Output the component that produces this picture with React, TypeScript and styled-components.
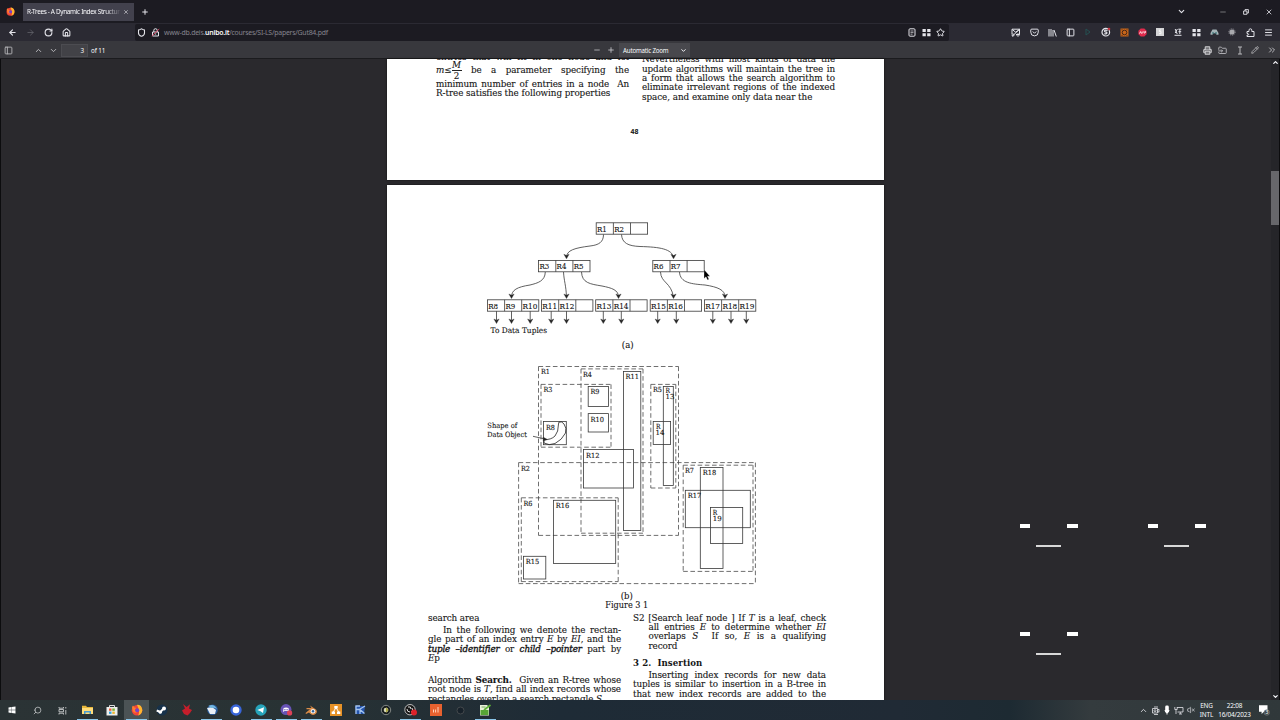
import React from "react";
import styled, { createGlobalStyle, css } from "styled-components";
import {
  ArrowLeft, ArrowRight, RotateCw, House, Shield, X, Plus, Minus, ChevronDown, ChevronUp, Star,
  PanelLeft, Menu, Printer, FolderInput, ChevronsRight, Pencil, Search, Pocket, VolumeX,
} from "lucide-react";
import { FaWindows } from "react-icons/fa";

const Global = createGlobalStyle`
  * { box-sizing: border-box; }
  html, body { margin: 0; background: #2a292d; overflow: hidden; }
  svg { display: block; flex: none; }
`;

const Screen = styled.div`
  position: relative;
  width: 1280px;
  height: 720px;
  overflow: hidden;
  display: flex;
  flex-direction: column;
  font-family: "Noto Sans", "Open Sans", sans-serif;
  color: #fbfbfe;
  background: #2a292d;
  box-shadow: inset 1px 0 #0c0c0e;
`;

const TabStrip = styled.div`
  height: 23px;
  flex: none;
  display: flex;
  align-items: center;
  background: #1c1b22;
`;

const Slot = styled.div<{ $w: number; $c?: string }>`
  width: ${(p) => p.$w}px;
  flex: none;
  display: flex;
  align-items: center;
  justify-content: center;
  color: ${(p) => p.$c ?? "#e4e4ea"};
`;

const Tab = styled.div`
  width: 111px;
  height: 18px;
  margin-left: 3px;
  padding: 0 5px 0 4px;
  display: flex;
  align-items: center;
  justify-content: space-between;
  background: #42414d;
  font-size: 6.4px;
`;

const TabTitle = styled.div`
  width: 95px;
  overflow: hidden;
  white-space: nowrap;
  letter-spacing: -0.33px;
  mask-image: linear-gradient(90deg, #000 82%, transparent);
`;

const Spacer = styled.div`
  flex: 1;
`;

const NavBar = styled.div`
  height: 18px;
  flex: none;
  display: flex;
  align-items: center;
  padding-left: 3px;
  background: #2b2a33;
`;

const UrlField = styled.div`
  width: 814px;
  height: 17px;
  margin: 0 58px 0 60px;
  display: flex;
  align-items: center;
  background: #1c1b22;
  border-radius: 2px;
`;

const Url = styled.div`
  margin-left: 2px;
  flex: 1;
  font-size: 6.9px;
  letter-spacing: -0.23px;
  white-space: nowrap;
  color: #85848e;
  b { color: #fbfbfe; font-weight: 600; }
`;

const PdfBar = styled.div`
  height: 18px;
  flex: none;
  display: flex;
  align-items: center;
  background: #38383d;
  border-bottom: 1px solid #1b1b1e;
  font-size: 6.3px;
  letter-spacing: -0.1px;
  padding-top: 1px;
`;

const PageInput = styled.div`
  width: 27px;
  height: 13px;
  margin-right: 3px;
  padding-right: 3px;
  line-height: 12px;
  text-align: right;
  background: #424247;
  border: 1px solid #4c4c51;
`;

const ZoomSelect = styled.div`
  width: 71px;
  height: 14px;
  margin-left: 1px;
  padding: 0 3px 0 4px;
  display: flex;
  align-items: center;
  justify-content: space-between;
  background: #48484d;
  font-size: 6.2px;
  letter-spacing: -0.2px;
`;

const Viewer = styled.div`
  height: 641px;
  flex: none;
  display: flex;
  justify-content: space-between;
`;

const Pages = styled.div`
  margin-left: 387px;
  width: 497px;
  display: flex;
  flex-direction: column;
  gap: 5px;
`;

const Sheet = styled.div<{ $h: number }>`
  height: ${(p) => p.$h}px;
  flex: none;
  overflow: hidden;
  background: #fff;
  color: #161616;
  box-shadow: 0 0 2px #111;
  font-family: "DejaVu Serif", serif;
  -webkit-text-stroke: 0.12px #161616;
`;

const Columns = styled.div<{ $left: number; $gap: number; $h: number; $pull?: number }>`
  display: flex;
  height: ${(p) => p.$h}px;
  gap: ${(p) => p.$gap}px;
  padding-left: ${(p) => p.$left}px;
  margin-top: ${(p) => -(p.$pull ?? 0)}px;
`;

const Column = styled.div`
  width: 193px;
`;

const Line = styled.div<{ $t?: number; $in?: number; $ragged?: boolean; $b?: boolean; $ls?: number }>`
  height: 9.4px;
  line-height: 9.4px;
  font-size: 8.8px;
  white-space: nowrap;
  letter-spacing: ${(p) => p.$ls ?? -0.1}px;
  margin-top: ${(p) => p.$t ?? 0}px;
  padding-left: ${(p) => p.$in ?? 0}px;
  text-align-last: ${(p) => (p.$ragged ? "left" : "justify")};
  ${(p) => p.$b && css`font-weight: bold; font-size: 8.6px; letter-spacing: 0.08px; -webkit-text-stroke: 0;`}
`;

const Term = styled.i`
  -webkit-text-stroke: 0.35px #161616;
`;

const FormulaLine = styled.div`
  height: 18px;
  display: flex;
  align-items: center;
  justify-content: space-between;
  font-size: 8.8px;
  line-height: 9.4px;
  letter-spacing: -0.1px;
`;

const Formula = styled.span`
  display: flex;
  align-items: center;
`;

const Fraction = styled.span`
  display: flex;
  flex-direction: column;
  align-items: center;
  width: 10px;
  line-height: 9px;
  i { width: 10px; text-align: center; border-bottom: 1px solid #222; }
  span { padding-top: 1px; }
`;

const Folio = styled.div`
  margin-top: 19px;
  text-align: center;
  font: bold 6.6px/9px "Liberation Mono", monospace;
  padding-right: 2px;
`;

const ScrollTrack = styled.div`
  width: 9px;
  display: flex;
  flex-direction: column;
  align-items: center;
  justify-content: space-between;
  background: #252529;
  border-right: 1px solid #0c0c0e;
`;

const Thumb = styled.div`
  width: 8px;
  height: 54px;
  margin: 105px 0 auto;
  background: #67676b;
`;

const Taskbar = styled.div`
  height: 20px;
  flex: none;
  display: flex;
  background: linear-gradient(90deg, #2b3335 0, #283234 310px, #1e2b36 560px, #202a35 900px, #1d2a32 1010px, #343b3e 1090px, #30383a 100%);
`;

const Task = styled.div<{ $on?: boolean; $active?: boolean; $c?: string }>`
  width: 24.9px;
  height: 20px;
  display: flex;
  align-items: center;
  justify-content: center;
  color: ${(p) => p.$c ?? "#fff"};
  background: ${(p) => (p.$active ? "#4b5355" : "transparent")};
  position: relative;
  &::after {
    content: "";
    position: absolute;
    left: 2px;
    right: 2px;
    bottom: 0;
    height: 1.4px;
    background: ${(p) => (p.$on ? "#8bc7ea" : "transparent")};
  }
`;

const TrayText = styled.div<{ $w: number }>`
  width: ${(p) => p.$w}px;
  display: flex;
  flex-direction: column;
  justify-content: center;
  align-items: center;
  font-size: 6.4px;
  line-height: 9.4px;
  letter-spacing: -0.15px;
  white-space: nowrap;
`;

const Face = styled.div<{ $x: number; $y: number }>`
  position: absolute;
  left: ${(p) => p.$x}px;
  top: ${(p) => p.$y}px;
  width: 58px;
  height: 23px;
  display: flex;
  flex-direction: column;
  justify-content: space-between;
  align-items: center;
`;
const Eyes = styled.div`
  width: 58px;
  display: flex;
  justify-content: space-between;
`;
const Eye = styled.div`
  width: 10.5px;
  height: 4px;
  background: #fff;
`;
const Mouth = styled.div`
  width: 24.5px;
  height: 2px;
  background: #d8d8d8;
`;

/* ---- R-tree drawing ---- */

type Node = { x: number; y: number; labels: string[] };
const nodes: Node[] = [
  { x: 596.2, y: 222.8, labels: ["R1", "R2", ""] },
  { x: 538.6, y: 260.4, labels: ["R3", "R4", "R5"] },
  { x: 652.8, y: 260.4, labels: ["R6", "R7", ""] },
  { x: 487.4, y: 299.8, labels: ["R8", "R9", "R10"] },
  { x: 541.5, y: 299.8, labels: ["R11", "R12", ""] },
  { x: 595.7, y: 299.8, labels: ["R13", "R14", ""] },
  { x: 650.2, y: 299.8, labels: ["R15", "R16", ""] },
  { x: 704.4, y: 299.8, labels: ["R17", "R18", "R19"] },
];
const curves = [
  "M603.5 234.5C603.5 242 599 245 590 246C575 248 566.5 250 566.5 257.5",
  "M621.5 234.5C622 243 628 246 640 246.5C660 247 672 249 673.5 257.5",
  "M545.3 272C545 281 538 283 530 285C517 287 511.5 290 511.5 297",
  "M563.5 272C564 281 566 285 566.5 297",
  "M581.5 272C582 283 590 284 602 286C612 288 618.5 290 618.5 297",
  "M660.5 272C661 283 671 282 673.5 297",
  "M679.5 272C680 283 692 284 705 285C718 287 725 290 725 297",
];
const drops = [496.5, 511.5, 530.2, 551.2, 566.5, 603.3, 621.3, 657.7, 676.3, 712.8, 731, 746.3];
const tips: [number, number][] = [
  [566.5, 258.8], [673.5, 258.8], [511.5, 298.5], [566.5, 298.5], [618.5, 298.5], [673.5, 298.5], [725, 298.5],
  ...drops.map((x): [number, number] => [x, 323.5]),
];

type Region = [number, number, number, number];
const dashed: Region[] = [
  [538.5, 366.5, 678.5, 535.4], [581, 368.9, 643, 533.2], [541, 384.4, 611, 447.2], [650.8, 384.4, 675.8, 488],
  [518.6, 462.6, 755.4, 583.6], [521.3, 497.8, 618.2, 581.6], [683.2, 465.2, 753, 571.4],
];
const solid: Region[] = [
  [588.2, 386.4, 608.5, 406.5], [588.2, 413.6, 608.5, 432], [623.4, 371.4, 640.8, 530.4], [663.3, 386.4, 673.3, 485.6],
  [653.2, 421.5, 670.6, 444.5], [543.5, 421.4, 566.3, 444.7], [583.4, 449.5, 633.5, 488], [553.4, 500.3, 615.7, 563.5],
  [523.4, 556.3, 545.8, 579], [700.3, 467.5, 723, 568.6], [685.3, 490.3, 750.3, 527.7], [710.4, 507.4, 742.7, 543.4],
];
const labels: [number, number, string][] = [
  [541, 374, "R1"], [583, 376.5, "R4"], [543.5, 391.5, "R3"], [590.5, 394, "R9"], [590.5, 421.8, "R10"],
  [625.5, 379, "R11"], [653, 391.5, "R5"], [665.5, 393.3, "R"], [665.5, 399.3, "13"], [656, 429, "R"], [655.5, 435, "14"],
  [546, 429.5, "R8"], [586, 457.5, "R12"], [521, 470.5, "R2"], [523.5, 505.5, "R6"], [555.8, 508, "R16"],
  [525.8, 563.7, "R15"], [685, 473, "R7"], [702.7, 475.2, "R18"], [687.8, 497.8, "R17"], [712.7, 514.8, "R"], [712.7, 520.8, "19"],
];

function Figure() {
  return (
    <svg width="497" height="400" viewBox="387 215 497 400" fill="none" stroke="#383838" strokeWidth="0.8">
      {nodes.map((n) => (
        <g key={n.labels[0]}>
          <rect x={n.x} y={n.y} width="51.4" height="11.4" />
          <path d={`M${n.x + 17.2} ${n.y}v11.4M${n.x + 34.3} ${n.y}v11.4`} />
          {n.labels.map((l, i) => l && (
            <text key={l} x={n.x + 0.8 + i * 17.2} y={n.y + 9} fontSize="8.2" fill="#151515" stroke="#151515" strokeWidth=".12"
              textLength={l.length === 2 ? 9.8 : 14.8} lengthAdjust="spacingAndGlyphs">{l}</text>
          ))}
        </g>
      ))}
      {curves.map((d) => <path key={d} d={d} />)}
      {drops.map((x) => <path key={x} d={`M${x} 311.2v9`} />)}
      {tips.map(([x, y]) => <path key={`${x}-${y}`} d={`M${x - 2.6} ${y - 4.5}L${x} ${y}L${x + 2.6} ${y - 4.5}L${x} ${y - 3.3}Z`} fill="#222" strokeWidth="0.4" />)}
      {dashed.map(([a, b, c, d]) => (
        <path key={`${a}${b}`} d={`M${a} ${b}H${c}M${a} ${d}H${c}M${a} ${b}V${d}M${c} ${b}V${d}`} strokeDasharray="4.6 2.6" stroke="#4a4a4a" />
      ))}
      {solid.map(([a, b, c, d]) => <rect key={`${a}${b}`} x={a} y={b} width={c - a} height={d - b} />)}
      <path d="M559 422Q562 421 564 424Q567 428 565.5 433Q562 440 555 443.5Q549 446 544 443V439.5Q551 440 555 436Q558.5 432 558.5 424Z" stroke="#222" />
      <path d="M533 436.3L545 439" />
      <path d="M543 437L547.5 439.6L543.3 441Z" fill="#222" strokeWidth="0.4" />
      <g fill="#151515" stroke="#151515" strokeWidth=".12">
        {labels.map(([x, y, s]) => (
          <text key={`${s}${x}${y}`} x={x} y={y} fontSize="7" textLength={s.length * 4.5} lengthAdjust="spacingAndGlyphs">{s}</text>
        ))}
        <text x="490.5" y="333" fontSize="7.8" textLength="56.5" lengthAdjust="spacingAndGlyphs">To Data Tuples</text>
        <text x="621.8" y="348" fontSize="8.4" textLength="11.8" lengthAdjust="spacingAndGlyphs">(a)</text>
        <text x="487.3" y="428.3" fontSize="7.2" textLength="30" lengthAdjust="spacingAndGlyphs">Shape of</text>
        <text x="487.3" y="437.1" fontSize="7.2" textLength="39.5" lengthAdjust="spacingAndGlyphs">Data Object</text>
        <text x="620.8" y="599" fontSize="8.4" textLength="12" lengthAdjust="spacingAndGlyphs">(b)</text>
        <text x="605.3" y="608.4" fontSize="8.8" textLength="43" lengthAdjust="spacingAndGlyphs">Figure 3 1</text>
      </g>
      <path d="M704 269.5V278.5L706 276.8L707.5 280L709 279.3L707.5 276.2H710Z" fill="#000" stroke="#fff" strokeWidth="0.3" />
    </svg>
  );
}

const Grid = () => (
  <svg width="9" height="9" viewBox="0 0 9 9" fill="currentColor"><path d="M.5 1h3.3v3H.5zM5.2 1h3.3v3H5.2zM.5 5.2h3.3v3H.5zM5.2 5.2h3.3v3H5.2z" /></svg>
);
const Fox = ({ s }: { s: number }) => (
  <svg width={s} height={s} viewBox="0 0 12 12">
    <circle cx="6" cy="6.3" r="5.3" fill="#f04438" />
    <path d="M6 1C9 0 11.5 3.5 11.3 6.5C11 9 9.5 11 7 11.5C9 9 8 5 6 1Z" fill="#ffb52e" />
    <path d="M1 3L2 1.5L3.5 3.5L5.5 4L4 5.2Q4 8 6.5 8Q3 10 1.8 7Z" fill="#ff7a2f" />
    <circle cx="6.2" cy="6.3" r="2" fill="#7543c9" />
  </svg>
);
const Reader = () => (
  <svg width="8" height="9" viewBox="0 0 8 9" fill="none" stroke="currentColor"><rect x="1" y=".8" width="6" height="7.4" rx="1" /><path d="M2.5 3h3M2.5 4.6h3M2.5 6.2h2" strokeWidth=".7" /></svg>
);
const Library = () => (
  <svg width="9" height="9" viewBox="0 0 9 9" fill="none" stroke="currentColor"><path d="M1 1v7.5M3 1v7.5M5 2v6.5M6 2l2.3 6.5" /></svg>
);
const MaskedMail = () => (
  <svg width="10" height="9" viewBox="0 0 10 9" fill="none" stroke="currentColor"><path d="M1 6V1.2h7.5V6.5H5M1.2 1.5L4.7 4.2 8.3 1.5M8.8 1L1 8.4" /><circle cx="2" cy="7" r="1.1" strokeWidth=".8" /><circle cx="7" cy="7" r="1.2" strokeWidth=".8" /></svg>
);
const Extensions = () => (
  <svg width="9" height="9" viewBox="0 0 9 9" fill="none" stroke="currentColor"><path d="M1 3.5h2V2.2a1.4 1.4 0 0 1 2.8 0V3.5H8v5H1V7.2q1.7 0 1.7-.8T1 5.5z" strokeLinejoin="round" /></svg>
);

export default function App() {
  return (
    <>
      <Global />
      <Screen>
        <TabStrip>
          <Slot $w={20}><Fox s={9} /></Slot>
          <Tab>
            <TabTitle>R-Trees - A Dynamic Index Structur</TabTitle>
            <X size={6} />
          </Tab>
          <Slot $w={21}><Plus size={8} strokeWidth={3} /></Slot>
          <Spacer />
          <Slot $w={20}><ChevronDown size={9} strokeWidth={3} /></Slot>
          <Slot $w={20} />
          <Slot $w={23} $c="#a0a0a5"><Minus size={8} strokeWidth={2} /></Slot>
          <Slot $w={23}>
            <svg width="6" height="6" viewBox="0 0 6 6" fill="none" stroke="currentColor" strokeWidth=".9"><path d="M.6 2h3.3v3.3H.6zM2 2V.6h3.4V4H4" /></svg>
          </Slot>
          <Slot $w={23}><X size={8} strokeWidth={2.4} /></Slot>
        </TabStrip>

        <NavBar>
          <Slot $w={18}><ArrowLeft size={9} strokeWidth={3} /></Slot>
          <Slot $w={18} $c="#66656e"><ArrowRight size={9} /></Slot>
          <Slot $w={18}><RotateCw size={9} strokeWidth={3} /></Slot>
          <Slot $w={18}><House size={9} strokeWidth={2.7} /></Slot>
          <UrlField>
            <Slot $w={13}><Shield size={9} strokeWidth={2.8} /></Slot>
            <Slot $w={14}>
              <svg width="9" height="9" viewBox="0 0 9 9" fill="none" stroke="currentColor"><path d="M1.5 4h6v4h-6zM2.8 4V2.4a1.7 1.7 0 0 1 3.4 0V4M3.8 6h1.4" /><path d="M.8 8L8.2 1" stroke="#e04463" strokeWidth=".9" /></svg>
            </Slot>
            <Url>www-db.deis.<b>unibo.it</b>/courses/SI-LS/papers/Gut84.pdf</Url>
            <Slot $w={15}><Reader /></Slot>
            <Slot $w={14}><Grid /></Slot>
            <Slot $w={14}><Star size={9} strokeWidth={2.6} /></Slot>
            <Slot $w={2} />
          </UrlField>
          <Slot $w={18}><MaskedMail /></Slot>
          <Slot $w={18}><Pocket size={9} strokeWidth={2.6} /></Slot>
          <Slot $w={18}><Library /></Slot>
          <Slot $w={18}><PanelLeft size={9} strokeWidth={2.6} /></Slot>
          <Slot $w={18} $c="#245052"><svg width="8" height="8" viewBox="0 0 8 8" fill="none" stroke="currentColor"><path d="M2 1v6l4-3z" /></svg></Slot>
          <Slot $w={18}>
            <svg width="10" height="10" viewBox="0 0 10 10" fill="none" stroke="currentColor" strokeWidth="1.2"><circle cx="4.8" cy="5.2" r="3.8" /><path d="M6.5 3.5Q3.5 2.5 3.6 4.3Q4 5.3 5.5 5.2Q7 6.8 3.3 6.9" /><circle cx="8" cy="2" r="1.3" fill="#c3343f" stroke="none" /></svg>
          </Slot>
          <Slot $w={18}>
            <svg width="9" height="9" viewBox="0 0 9 9"><path d="M.5.5h8v8h-8z" fill="#c8661b" /><circle cx="4.5" cy="4.5" r="2.3" fill="none" stroke="#452718" strokeWidth="1" /><path d="M2 1.2v1M7 1.2v1M2 7v1M7 7v1" stroke="#452718" strokeWidth=".7" /></svg>
          </Slot>
          <Slot $w={18}>
            <svg width="9" height="9" viewBox="0 0 9 9"><path d="M2.7.4h3.6l2.3 2.3v3.6L6.3 8.6H2.7L.4 6.3V2.7z" fill="#e02b4d" /><path d="M1.5 5.6l1-2 1 2M4.2 3.5v2M5 4h1M6.5 3.5h1v1h-1v1" fill="none" stroke="#fff" strokeWidth=".8" /></svg>
          </Slot>
          <Slot $w={18}><svg width="8" height="8" viewBox="0 0 8 8"><path d="M0 0h8v8H0z" fill="#d4d4d6" /><path d="M5 2H3.4v1.6H5v2H3" fill="none" stroke="#f6f6f6" /></svg></Slot>
          <Slot $w={18}><svg width="8" height="8" viewBox="0 0 8 8" fill="none" stroke="currentColor"><path d="M.5 7.3h7M1.2 1l2 5M3.4 1L1.2 5M4.3 1.2h3M5.8 1.2V6M4.5 3.7h2.7" /></svg></Slot>
          <Slot $w={18}><Grid /></Slot>
          <Slot $w={18} $c="#a4b3b7"><svg width="9" height="7" viewBox="0 0 9 7" fill="currentColor"><path d="M2.5.5h4L8.5 4v1.7H6.6L5.5 4.3h-2L2.4 5.7H.5V4z" /><path d="M2 4h2M5 4h2" stroke="#26686c" /></svg></Slot>
          <Slot $w={18} $c="#a9a9ae"><svg width="8" height="8" viewBox="0 0 8 8"><circle cx="4" cy="4" r="2.6" fill="currentColor" /><circle cx="4" cy="4" r="3.2" fill="none" stroke="currentColor" strokeDasharray="1 1" strokeWidth=".8" /></svg></Slot>
          <Slot $w={18}><Extensions /></Slot>
          <Slot $w={18}><Menu size={9} strokeWidth={2.6} /></Slot>
        </NavBar>

        <PdfBar>
          <Slot $w={16} $c="#b4b4b8"><PanelLeft size={9} strokeWidth={2.4} /></Slot>
          <Slot $w={15} />
          <Slot $w={15} $c="#b4b4b8"><ChevronUp size={9} strokeWidth={2.6} /></Slot>
          <Slot $w={15} $c="#b4b4b8"><ChevronDown size={9} strokeWidth={2.6} /></Slot>
          <PageInput>3</PageInput>
          <span>of 11</span>
          <Spacer />
          <Slot $w={14} $c="#c4c4c8"><Minus size={8} strokeWidth={2.4} /></Slot>
          <Slot $w={14} $c="#c4c4c8"><Plus size={8} strokeWidth={2.6} /></Slot>
          <ZoomSelect>Automatic Zoom<ChevronDown size={7} strokeWidth={3.2} /></ZoomSelect>
          <Slot $w={510} />
          <Slot $w={15} $c="#c9c9cc"><Printer size={9} strokeWidth={2.8} fill="#77777b" /></Slot>
          <Slot $w={15} $c="#b9b9bd"><FolderInput size={9} strokeWidth={2.4} /></Slot>
          <Slot $w={20} $c="#b9b9bd"><svg width="6" height="9" viewBox="0 0 6 9" fill="none" stroke="currentColor"><path d="M1 1h4M1 8h4M3 1v7" /></svg></Slot>
          <Slot $w={10} $c="#b9b9bd"><Pencil size={8} strokeWidth={2.5} /></Slot>
          <Slot $w={4.5} />
          <Slot $w={15.5} $c="#b9b9bd"><ChevronsRight size={10} strokeWidth={2.4} /></Slot>
        </PdfBar>

        <Viewer>
          <Pages>
            <Sheet $h={121}>
              <Columns $left={49} $gap={13} $h={56} $pull={6.5}>
                <Column>
                  <Line>entries that will fit in one node and let</Line>
                  <FormulaLine>
                    <Formula><i>m</i>≤<Fraction><i>M</i><span>2</span></Fraction></Formula>
                    <span>be</span><span>a</span><span>parameter</span><span>specifying</span><span>the</span>
                  </FormulaLine>
                  <Line>minimum number of entries in a node &nbsp;An</Line>
                  <Line $ragged $ls={-0.07}>R-tree satisfies the following properties</Line>
                </Column>
                <Column>
                  <Line $t={2.7}>Nevertheless with most kinds of data the</Line>
                  <Line>update algorithms will maintain the tree in</Line>
                  <Line>a form that allows the search algorithm to</Line>
                  <Line>eliminate irrelevant regions of the indexed</Line>
                  <Line $ragged $ls={-0.05}>space, and examine only data near the</Line>
                </Column>
              </Columns>
              <Folio>48</Folio>
            </Sheet>
            <Sheet $h={515}>
              <Columns $left={0} $gap={0} $h={425} $pull={-30}><Figure /></Columns>
              <Columns $left={41} $gap={12} $h={100} $pull={26.4}>
                <Column>
                  <Line $ragged>search area</Line>
                  <Line $t={2.8} $in={15}>In the following we denote the rectan-</Line>
                  <Line>gle part of an index entry <i>E</i> by <i>EI</i>, and the</Line>
                  <Line $ls={-0.14}><Term>tuple –identifier</Term> or <Term>child –pointer</Term> part by</Line>
                  <Line $ragged><i>E</i>p</Line>
                  <Line $t={12.5}>Algorithm <b>Search.</b> &nbsp;Given an R-tree whose</Line>
                  <Line>root node is <i>T</i>, find all index records whose</Line>
                  <Line $ragged>rectangles overlap a search rectangle <i>S</i></Line>
                </Column>
                <Column>
                  <Line>S2 [Search leaf node ] If <i>T</i> is a leaf, check</Line>
                  <Line $in={15.5}>all entries <i>E</i> to determine whether <i>EI</i></Line>
                  <Line $in={15.5}>overlaps <i>S</i> &nbsp;If so, <i>E</i> is a qualifying</Line>
                  <Line $in={15.5} $ragged>record</Line>
                  <Line $t={7.5} $ragged $b>3 2. &nbsp;Insertion</Line>
                  <Line $t={3} $in={15.5}>Inserting index records for new data</Line>
                  <Line>tuples is similar to insertion in a B-tree in</Line>
                  <Line>that new index records are added to the</Line>
                </Column>
              </Columns>
            </Sheet>
          </Pages>
          <ScrollTrack>
            <ChevronUp size={7} strokeWidth={4} />
            <Thumb />
            <ChevronDown size={7} strokeWidth={4} />
          </ScrollTrack>
        </Viewer>

        <Taskbar>
          <Task><FaWindows size={8} /></Task>
          <Task $c="#c9cccd"><Search size={9} transform="scale(-1 1)" /></Task>
          <Task $c="#c9cccd"><svg width="9" height="9" viewBox="0 0 9 9" fill="none" stroke="currentColor"><path d="M1 1v1.2h4.5V1M1 3.5h4.5v2.3H1zM1 8.5V7.2h4.5v1.3M7.8 1v1.5M7.8 4v4.5" strokeWidth=".9" /></svg></Task>
          <Task $on><svg width="11" height="10" viewBox="0 0 11 10"><path d="M0 .8h4l1 1.3h6V9H0z" fill="#e7b73b" /><path d="M0 3h11v6H0z" fill="#ffdc79" /><path d="M2 6h7v3H7.5V7.5h-4V9H2z" fill="#479bd3" /></svg></Task>
          <Task><svg width="12" height="11" viewBox="0 0 12 11"><path d="M3.5 2V.5h5V2" fill="none" stroke="#ddd" /><path d="M.5 2h11v8.5H.5z" fill="#eceeed" /><path d="M3 3.5h2.5v2.3H3z" fill="#ef5a3a" /><path d="M6.3 3.5h2.5v2.3H6.3z" fill="#7bb52f" /><path d="M3 6.6h2.5v2.3H3z" fill="#35a2dc" /><path d="M6.3 6.6h2.5v2.3H6.3z" fill="#efb62f" /></svg></Task>
          <Task $on $active><Fox s={12} /></Task>
          <Task><svg width="12" height="12" viewBox="0 0 12 12"><circle cx="6" cy="6" r="5.5" fill="#17324b" /><path d="M.7 6.5L4.5 8 7 5.2" fill="none" stroke="#fff" strokeWidth="2" /><circle cx="8" cy="4.4" r="2" fill="#fff" /><circle cx="4.3" cy="8.2" r="1.6" fill="#fff" /></svg></Task>
          <Task><svg width="12" height="12" viewBox="0 0 12 12"><path d="M2 0L5.7 3 9 .3 8 4.5 11 6 9 9 6.5 11.5 3 10 1 6.5 4 4.5z" fill="#c51e2b" /></svg></Task>
          <Task $on><svg width="12" height="12" viewBox="0 0 12 12"><circle cx="6.5" cy="5.7" r="5.3" fill="#285b9b" /><path d="M1 4L6 3l4 3-1 4H4z" fill="#e7eef5" /><path d="M2.5 1.8Q8-1 11 5Q8 3 5 4Z" fill="#71b6df" /></svg></Task>
          <Task><svg width="12" height="12" viewBox="0 0 12 12"><circle cx="6" cy="6" r="5.7" fill="#3865d9" /><circle cx="6" cy="6" r="3.3" fill="#fff" /></svg></Task>
          <Task $on $c="#26a4ba"><svg width="12" height="12" viewBox="0 0 12 12"><circle cx="6" cy="6" r="5.7" fill="currentColor" /><path d="M2.3 6L9 3.2 8 9 5.5 7.2z" fill="#fff" /></svg></Task>
          <Task $on><svg width="13" height="12" viewBox="0 0 13 12"><circle cx="6" cy="5.6" r="5.5" fill="#6753b5" /><path d="M3 8L3.6 4Q6 2.8 8.5 4L9 8 7.5 7h-3z" fill="#fff" /><circle cx="4.9" cy="5.7" r=".7" fill="#6753b5" /><circle cx="7.1" cy="5.7" r=".7" fill="#6753b5" /><circle cx="9.6" cy="8.9" r="2.6" fill="#dc4258" /></svg></Task>
          <Task $on $c="#d98b47"><svg width="13" height="11" viewBox="0 0 13 11"><path d="M5 .5L11 4.5Q13 7 10.5 9 7.5 11 5 8.5L4 7.5 1 9 .5 8 5 4.3H1.5V3h5z" fill="currentColor" /><circle cx="8" cy="6.3" r="2.3" fill="#f3f3f3" /><circle cx="8" cy="6.3" r="1.2" fill="#31649b" /></svg></Task>
          <Task><svg width="12" height="12" viewBox="0 0 12 12"><path d="M0 0h12v12H0z" fill="#e69227" /><path d="M6 3.5L3 8.5M6 3.5l3 5" stroke="#fff" /><path d="M4.3 2h3.4v2.6H4.3zM1.7 7.4H5V10H1.7zM7 7.4h3.3V10H7z" fill="#fff" /></svg></Task>
          <Task><svg width="13" height="12" viewBox="0 0 13 12"><path d="M1 2h10l-1 8H2z" fill="#2454ac" /><path d="M2 10V2h4M2.5 5.5h3M6 10V5l5-3M6.5 6l4 3.5" fill="none" stroke="#a5c5ee" strokeWidth="1.3" /></svg></Task>
          <Task><svg width="12" height="12" viewBox="0 0 12 12"><circle cx="6" cy="6" r="4.7" fill="#171c1d" stroke="#8d9290" strokeWidth=".9" /><circle cx="6" cy="6" r="2.3" fill="#d8d7b6" /><path d="M6 3v6L8.5 6z" fill="#a8a53d" /></svg></Task>
          <Task $on><svg width="14" height="12" viewBox="0 0 14 12"><circle cx="6" cy="5.7" r="5.2" fill="#171717" stroke="#bbb" /><path d="M4 3q3-1 3 2M8 4q2 3-1 4M3 5q0 3 3 3" fill="none" stroke="#ddd" /><circle cx="10" cy="8.5" r="3" fill="#dc222a" /></svg></Task>
          <Task><svg width="12" height="12" viewBox="0 0 12 12"><path d="M0 0h12v12H0z" fill="#e8612f" /><path d="M3.5 8.5V5.5M5.6 8.5v-3M8 8.5V3" stroke="#ffd4bd" /></svg></Task>
          <Task><svg width="9" height="9" viewBox="0 0 9 9"><circle cx="4.5" cy="4.5" r="3.5" fill="#17212a" stroke="#44494c" /></svg></Task>
          <Task $on><svg width="13" height="12" viewBox="0 0 13 12"><path d="M1 1h7l2 2v8.5H1z" fill="#e7f1d8" /><path d="M1.5 6h8v5h-8z" fill="#57a637" /><path d="M5 6L11.5 1" stroke="#5cb134" strokeWidth="1.6" /><path d="M2.5 3h4" stroke="#7aa562" /></svg></Task>
          <Spacer />
          <Slot $w={12}><ChevronUp size={9} strokeWidth={2.2} /></Slot>
          <Slot $w={12}><svg width="9" height="9" viewBox="0 0 9 9" fill="none" stroke="currentColor" strokeWidth=".8"><path d="M3 1h4M1.5 2.5h5v4.5h-5zM6.5 4l1.5-.8v3L6.5 5.5M3 8.5h4" /><circle cx="4" cy="4.7" r="1" /></svg></Slot>
          <Slot $w={12} $c="#fff"><svg width="6" height="10" viewBox="0 0 6 10" fill="currentColor"><rect x="1.2" y=".5" width="3.6" height="6.5" rx="1.4" /><path d="M.5 5h5Q5 8 3.5 8.2V9.5h-1V8.2Q1 8 .5 5z" /></svg></Slot>
          <Slot $w={12}><svg width="10" height="9" viewBox="0 0 10 9" fill="none" stroke="currentColor" strokeWidth=".8"><path d="M3 1.5h6V6H3.5M5 8h3M6.3 6v2M.8 1v2.5h2.4V1M2 3.5V8" /></svg></Slot>
          <Slot $w={11}><VolumeX size={8} strokeWidth={2} /></Slot>
          <TrayText $w={21}><span>ENG</span><span>INTL</span></TrayText>
          <TrayText $w={35}><span>22:08</span><span>16/04/2023</span></TrayText>
          <Slot $w={24}>
            <svg width="12" height="12" viewBox="0 0 12 12"><path d="M1 1.2h8.5v6.6H6L3.6 10V7.8H1z" fill="#fff" /><circle cx="8.8" cy="8.5" r="2.8" fill="#444b4e" stroke="#858b8d" strokeWidth=".5" /><text x="7.4" y="10.4" fontSize="5" fill="#fff">3</text></svg>
          </Slot>
          <Slot $w={4} />
        </Taskbar>

        {[[1019.5, 524], [1147.5, 524], [1019.5, 632]].map(([x, y]) => (
          <Face key={`${x}-${y}`} $x={x} $y={y}>
            <Eyes><Eye /><Eye /></Eyes>
            <Mouth />
          </Face>
        ))}
      </Screen>
    </>
  );
}
